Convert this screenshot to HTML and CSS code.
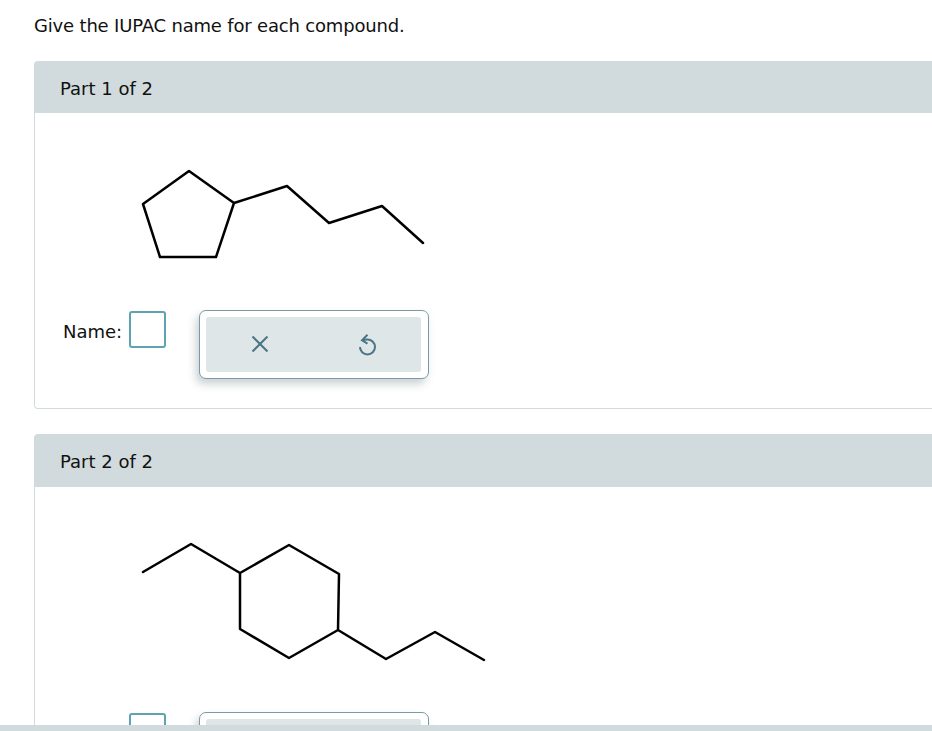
FILE: index.html
```html
<!DOCTYPE html>
<html lang="en">
<head>
<meta charset="utf-8">
<title>Give the IUPAC name for each compound</title>
<link rel="stylesheet" href="styles.css">
</head>
<body>
<main class="page">
  <p class="prompt">Give the IUPAC name for each compound.</p>

  <section class="part part-first">
    <header class="part-head">Part 1 of 2</header>
    <div class="part-body">
      <svg class="molecule mol-one" width="340" height="150" viewBox="100 140 340 150">
        <path d="M189 171 L234 203 L216 257 L160 257 L143 204 Z M234 203 L287 186 L329 223 L382 206 L423 243"/>
      </svg>
      <div class="answer">
        <span class="name-label">Name:</span>
        <span class="name-box"></span>
        <div class="tools">
          <div class="tools-inner">
            <svg class="tool-icon" width="20" height="20" viewBox="0 0 20 20"><path d="M2.5 1.5 L17.5 16.5 M17.5 1.5 L2.5 16.5"/></svg>
            <svg class="tool-icon" width="20" height="22" viewBox="0 0 20 22"><path d="M4 6.5 C5.5 5.6 7.5 5.5 9.5 5.5 A7.5 7.5 0 1 1 2 13 M9.5 0.7 L4 6.3 L9.5 9.7"/></svg>
          </div>
        </div>
      </div>
    </div>
  </section>

  <section class="part">
    <header class="part-head">Part 2 of 2</header>
    <div class="part-body">
      <svg class="molecule mol-two" width="380" height="150" viewBox="120 530 380 150">
        <path d="M143 572 L191 544 L240 573 L289 545 L339 574 L338 630 L289 658 L240 629 L240 573 M338 630 L386 659 L435 632 L484 660"/>
      </svg>
      <div class="answer">
        <span class="name-label"></span>
        <span class="name-box"></span>
        <div class="tools">
          <div class="tools-inner"></div>
        </div>
      </div>
    </div>
  </section>
</main>
<div class="bottom-bar"></div>
</body>
</html>
```

FILE: styles.css
```css
* { box-sizing: border-box; }

html, body { height: 100%; }

body {
  margin: 0;
  display: flex;
  flex-direction: column;
  height: 731px;
  overflow: hidden;
  background: #fff;
  color: #111;
  font-family: "DejaVu Sans", sans-serif;
  font-size: 18px;
}

.page {
  flex: 1;
  min-height: 0;
  overflow: hidden;
  padding: 15px 0 0 34px;
}

.prompt {
  margin: 0 0 24px;
  height: 22px;
  line-height: 22px;
  letter-spacing: -0.18px;
}

.part {
  margin-right: -12px;
}

.part-first {
  margin-bottom: 25px;
}

.part-head {
  height: 53px;
  padding-left: 26px;
  line-height: 55px;
  background: #d1dadc;
  border-radius: 4px 0 0 0;
}

.part-first .part-head {
  height: 52px;
}

.part-body {
  display: flow-root;
  border: 1px solid #d1dadc;
  border-top: 0;
  border-radius: 0 0 0 4px;
  padding-left: 28px;
}

.part-first .part-body {
  height: 296px;
}

.molecule {
  display: block;
  fill: none;
  stroke: #000;
  stroke-width: 2.5;
  stroke-linejoin: round;
  stroke-linecap: round;
}

.mol-one { margin: 27px 0 0 37px; }
.mol-two { margin: 43px 0 0 57px; }

.answer {
  display: flex;
  align-items: flex-start;
}

.mol-one + .answer { margin-top: 20px; }
.mol-two + .answer { margin-top: 32px; }

.name-label {
  width: 66px;
  margin-top: 11px;
  line-height: 22px;
}

.name-box {
  width: 37px;
  height: 37px;
  margin-top: 1px;
  border: 2px solid #5fa2b2;
  border-radius: 3px;
  background: #fff;
}

.tools {
  width: 230px;
  height: 69px;
  margin-left: 33px;
  padding: 6px 7px 6px 6px;
  border: 1px solid #7c9aa6;
  border-radius: 7px;
  background: #fff;
  box-shadow: -3px 5px 9px rgba(70, 90, 100, 0.28);
}

.tools-inner {
  height: 55px;
  padding-left: 44px;
  display: flex;
  align-items: center;
  gap: 88px;
  background: #dfe6e8;
  border-radius: 3px;
}

.tool-icon {
  fill: none;
  stroke: #4a7585;
  stroke-width: 2;
}

.bottom-bar {
  flex: none;
  height: 6px;
  background: #d1dadc;
}
```
